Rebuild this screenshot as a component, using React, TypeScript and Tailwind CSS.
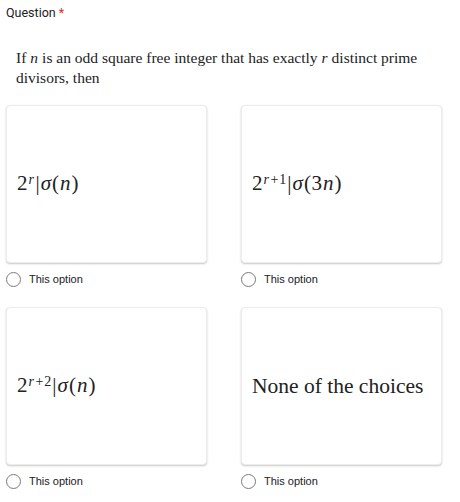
import React from 'react';

const serif = { fontFamily: '"Liberation Serif", "DejaVu Serif", serif' };

const Sup = ({ children }: { children: React.ReactNode }) => (
    <sup className="relative -top-[6px] align-baseline text-[14px] tracking-[1px]">{children}</sup>
);

// little italic variable, like Cambria Math
const V = ({ children }: { children: React.ReactNode }) => <i className="px-[0.5px]">{children}</i>;

const options: { id: string; body: React.ReactNode }[] = [
    {
        id: 'a',
        body: (
            <span className="text-[21px] tracking-[0.5px]">
                2<Sup><V>r</V></Sup>|<V>σ</V>(<V>n</V>)
            </span>
        ),
    },
    {
        id: 'b',
        body: (
            <span className="text-[21px] tracking-[0.5px]">
                2<Sup><V>r</V>+1</Sup>|<V>σ</V>(3<V>n</V>)
            </span>
        ),
    },
    {
        id: 'c',
        body: (
            <span className="text-[21px] tracking-[0.5px]">
                2<Sup><V>r</V>+2</Sup>|<V>σ</V>(<V>n</V>)
            </span>
        ),
    },
    {
        id: 'd',
        body: <span className="text-[21.5px]">None of the choices</span>,
    },
];

export default function App() {
    return (
        <div className="w-[460px] h-[502px] bg-white px-[6px] pt-[5px] text-[#202124]">
            <div className="text-[12.5px] leading-4" style={{ fontFamily: 'Roboto, "Liberation Sans", sans-serif' }}>
                Question <span className="text-[#d93025]">*</span>
            </div>

            <p className="mt-[27px] pl-[10px] pr-4 text-[15.5px] leading-5 text-[#222]" style={serif}>
                If<i className="mx-[4px]">n</i>is an odd square free integer that has exactly<i className="mx-[4px]">r</i>distinct
                prime divisors, then
            </p>

            <div className="mt-[17px] grid grid-cols-[201px_201px] gap-x-[34px] gap-y-[21px]">
                {options.map((o) => (
                    <div key={o.id}>
                        <div
                            className="flex h-[158px] items-center rounded-[4px] border border-[#ececec] bg-white px-[10px] text-[#222] shadow-[0_1px_2px_rgba(0,0,0,0.22)]"
                            style={serif}
                        >
                            {o.body}
                        </div>
                        <label className="mt-[9px] flex h-[14px] items-center gap-[8px]">
                            <span className="h-[15px] w-[15px] shrink-0 rounded-full border-[1.5px] border-[#7a7a7a] bg-white" />
                            <span
                                className="text-[11px] text-[#202124]"
                                style={{ fontFamily: '"Liberation Sans", Arial, sans-serif' }}
                            >
                                This option
                            </span>
                        </label>
                    </div>
                ))}
            </div>
        </div>
    );
}
